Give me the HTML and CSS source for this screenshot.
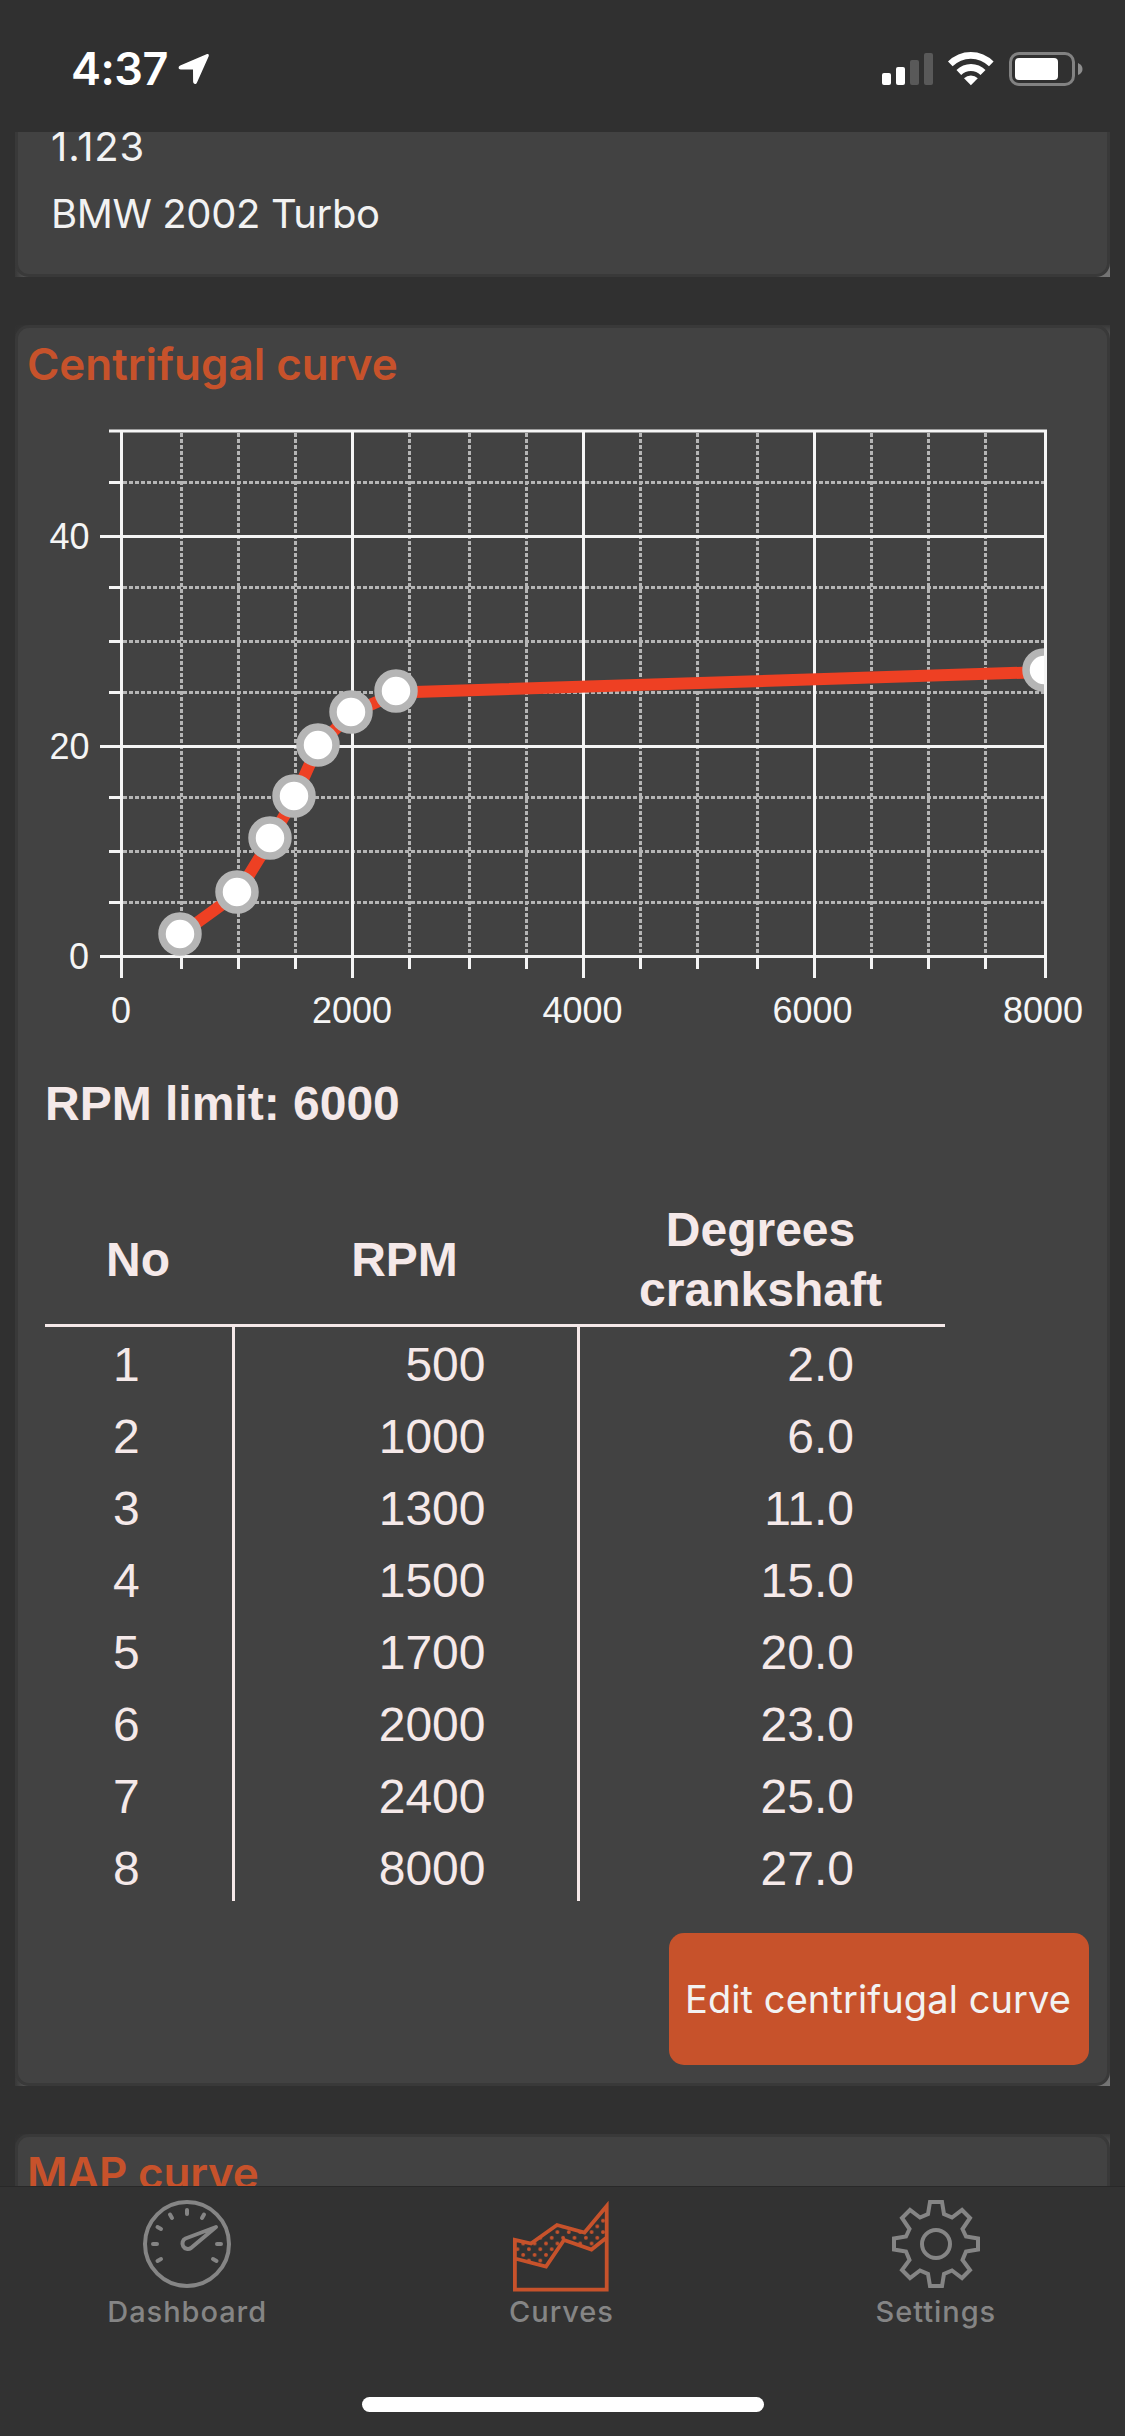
FILE: index.html
```
<!DOCTYPE html>
<html lang="en">
<head>
<meta charset="utf-8">
<title>Curves</title>
<link rel="stylesheet" href="styles.css">
</head>
<body>
<div class="screen">
  <header class="status">
    <div class="status-left">
      <span class="time">4:37</span>
      <svg class="location" width="32" height="32" viewBox="0 0 32 32"><path d="M28.5 1.2 2.2 12.6C-.2 13.8.3 16.3 2.8 16.4L15 16.5 15.1 28.6C15.2 31.4 18 31.8 19 29.4L30.6 3.4C31.4 1.5 30 .5 28.5 1.2Z" fill="#fff"/></svg>
    </div>
    <svg class="status-icons" width="202" height="36" viewBox="881 51 202 36">
      <g fill="#fff">
        <rect x="882" y="73" width="9" height="12" rx="2"/>
        <rect x="896" y="67" width="9" height="18" rx="2"/>
        <rect x="910" y="60" width="9" height="25" rx="2" opacity=".2"/>
        <rect x="924" y="53" width="9" height="32" rx="2" opacity=".2"/>
        <path d="M948 61.500A32 32 0 0 1 993.600 61.500L989 66.300A25.500 25.500 0 0 0 952.600 66.300Z"/>
        <path d="M956.500 70A20.500 20.500 0 0 1 985.500 70L980.500 75A13.500 13.500 0 0 0 961.200 75Z"/>
        <path d="M964 78.300A10 10 0 0 1 977.800 78.300L970.900 85.300Z"/>
        <rect x="1015" y="58" width="43" height="22" rx="4"/>
        <path d="M1078 63Q1082.500 65 1082.500 69T1078 75Z" opacity=".45"/>
      </g>
      <rect x="1010.500" y="53.500" width="63" height="31" rx="8.500" fill="none" stroke="#828282" stroke-width="3"/>
    </svg>
  </header>

  <main class="content">
    <section class="frame">
      <div class="card card-info">
        <p class="info version">1.123</p>
        <p class="info">BMW 2002 Turbo</p>
      </div>
    </section>

    <section class="frame">
      <div class="card card-curve">
        <h2 class="title">Centrifugal curve</h2>
        <svg class="chart" width="1089" height="640" viewBox="18 400 1089 640">
          <defs><clipPath id="plot"><rect x="120" y="430" width="924" height="527"/></clipPath></defs>
          <path class="minor" d="M181.500 433V956M238.500 433V956M295.500 433V956M409.500 433V956M469.500 433V956M526.500 433V956M640.500 433V956M697.500 433V956M757.500 433V956M871.500 433V956M928.500 433V956M985.500 433V956"/>
          <path class="minor" d="M123 482.500H1044M123 587.500H1044M123 641.500H1044M123 692.500H1044M123 797.500H1044M123 851.500H1044M123 902.500H1044"/>
          <path class="major" d="M121.500 431V978M352.500 431V978M583.500 431V978M814.500 431V978M1045.500 429.500V978M109 431H1047M100 536.500H1047M100 746.500H1047M100 956.500H1047"/>
          <path class="major" d="M109 482.500H121M109 587.500H121M109 641.500H121M109 692.500H121M109 797.500H121M109 851.500H121M109 902.500H121"/>
          <path class="major" d="M181.500 957V969M238.500 957V969M295.500 957V969M409.500 957V969M469.500 957V969M526.500 957V969M640.500 957V969M697.500 957V969M757.500 957V969M871.500 957V969M928.500 957V969M985.500 957V969"/>
          <g clip-path="url(#plot)">
            <polyline class="curve" points="180,935 238,893 271,839 295,797 318,746 352,713 398,692.500 1045,672"/>
            <g class="points">
              <circle cx="180" cy="934" r="18"/><circle cx="237" cy="892" r="18"/><circle cx="270" cy="838" r="18"/><circle cx="294" cy="796" r="18"/><circle cx="318" cy="745" r="18"/><circle cx="351" cy="712" r="18"/><circle cx="396" cy="691" r="18"/><circle cx="1044" cy="670" r="18"/>
            </g>
          </g>
          <g class="axis end"><text x="89.500" y="549">40</text><text x="89.500" y="759">20</text><text x="89" y="969">0</text></g>
          <g class="axis mid"><text x="121" y="1023">0</text><text x="352" y="1023">2000</text><text x="582.500" y="1023">4000</text><text x="812.500" y="1023">6000</text><text x="1043" y="1023">8000</text></g>
        </svg>
        <p class="limit">RPM limit: 6000</p>
        <table class="table">
          <thead><tr><th>No</th><th>RPM</th><th>Degrees<br>crankshaft</th></tr></thead>
          <tbody>
            <tr><td>1</td><td>500</td><td>2.0</td></tr>
            <tr><td>2</td><td>1000</td><td>6.0</td></tr>
            <tr><td>3</td><td>1300</td><td>11.0</td></tr>
            <tr><td>4</td><td>1500</td><td>15.0</td></tr>
            <tr><td>5</td><td>1700</td><td>20.0</td></tr>
            <tr><td>6</td><td>2000</td><td>23.0</td></tr>
            <tr><td>7</td><td>2400</td><td>25.0</td></tr>
            <tr><td>8</td><td>8000</td><td>27.0</td></tr>
          </tbody>
        </table>
        <button class="edit">Edit centrifugal curve</button>
      </div>
    </section>

    <section class="frame">
      <div class="card card-map"><h2 class="title">MAP curve</h2></div>
    </section>
  </main>

  <nav class="tabs">
    <div class="tab">
      <svg width="92" height="92" viewBox="0 0 92 92" fill="none" stroke="#858585" stroke-width="4" stroke-linecap="round" stroke-linejoin="round">
        <circle cx="46" cy="46" r="42"/>
        <path d="M46 12v4M29 16.500l2 3.500M63 16.500l-2 3.500M16.500 29l3.500 2M12 46h4M16.500 63l3.500-2M80 46h-4M75.500 63l-3.500-2"/>
        <path d="M75 29 44.500 40.500A5.500 5.500 0 1 0 50 50Z"/>
      </svg>
      <span>Dashboard</span>
    </div>
    <div class="tab">
      <svg width="100" height="94" viewBox="512 2198 100 94">
        <defs>
          <pattern id="dots" x="528" y="2243.500" width="11.400" height="11.400" patternUnits="userSpaceOnUse"><circle cx="1.900" cy="5.700" r="1.900" fill="#c7522b"/><circle cx="7.600" cy="11.400" r="1.900" fill="#c7522b"/><circle cx="7.600" cy="0" r="1.900" fill="#c7522b"/></pattern>
        </defs>
        <path d="M516 2240 532 2243 558 2225 585 2232 608 2205V2238L592 2249 565 2240 547 2267 516 2259Z" fill="url(#dots)"/>
        <path d="M515.900 2239.800 532 2243.500 558 2225 585.500 2232.500 607.700 2206V2289.700H515.900ZM515.900 2258.500 547 2266.500 565 2240 592.500 2249.500 607.700 2237.500" fill="none" stroke="#c7522b" stroke-width="3.800"/>
      </svg>
      <span>Curves</span>
    </div>
    <div class="tab">
      <svg width="92" height="92" viewBox="0 0 92 92" fill="none" stroke="#858585" stroke-width="4">
        <circle cx="46" cy="46" r="14"/>
        <path d="M40 4H52L54 16 62 19.500 72 12 80 20 72.500 31 76 38.500 88 40.500V51.500L76 53.500 72.500 62 80 72 72 80 62 72.500 54 76 52 88H40L38 76 30 72.500 20 80 12 72 19.500 62 16 53.500 4 51.500V40.500L16 38.500 19.500 31 12 20 20 12 30 19.500 38 16Z"/>
      </svg>
      <span>Settings</span>
    </div>
  </nav>
  <div class="home"><i></i></div>
</div>
</body>
</html>
```
FILE: styles.css
```
* { box-sizing: border-box; margin: 0; padding: 0; }
body { background: #303030; }
.screen { width: 1125px; height: 2436px; display: flex; flex-direction: column; overflow: hidden; background: #303030; font-family: Inter, "Liberation Sans", sans-serif; color: #f2f2f2; }

.status { height: 132px; flex: none; display: flex; justify-content: space-between; padding: 51px 42px 0 71px; }
.status-left { display: flex; gap: 9px; }
.time { font-size: 45px; font-weight: 600; line-height: 36px; width: 98px; color: #fff; letter-spacing: -.5px; white-space: nowrap; }
.location { margin-top: 2px; }

.content { height: 2054px; flex: none; overflow: hidden; display: flex; flex-direction: column; gap: 48px; padding: 0 15px; }
/* square frame: its shaded corners show outside the card's rounded border */
.frame {
  flex: none; width: 1095px;
  background:
    linear-gradient(135deg, #303030, #383838) 0 0 / 14px 14px no-repeat,
    linear-gradient(180deg, #383838, #5c5c5c) 100% 0 / 14px 14px no-repeat,
    linear-gradient(90deg, #383838, #5c5c5c) 0 100% / 14px 14px no-repeat,
    linear-gradient(135deg, #666, #777) 100% 100% / 14px 14px no-repeat;
}
.frame:first-child { background-size: 0 0, 0 0, 14px 14px, 14px 14px; }
.card { border: 3px solid #393939; border-radius: 14px; background: #424242; }
.card-info { height: 145px; border-top: 0; border-radius: 0 0 14px 14px; padding: 0 0 0 33px; overflow: hidden; }
.info { font-size: 40px; line-height: 67px; height: 67px; letter-spacing: -.4px; }
.version { margin-top: -19px; letter-spacing: .9px; }
.card-curve { height: 1761px; }
.card-map { height: 300px; }
.title { font-size: 44px; font-weight: 600; line-height: 54px; height: 72px; padding: 9px 0 0 9px; color: #c7522b; letter-spacing: -.05px; }
.card-map .title { letter-spacing: -.25px; }

.chart { display: block; font-family: "Liberation Sans", Arial, sans-serif; }
.major { stroke: #f5f5f5; stroke-width: 3; fill: none; }
.minor { stroke: #b5b5b5; stroke-width: 3; stroke-dasharray: 4 2; fill: none; }
.curve { stroke: #ee4023; stroke-width: 12; fill: none; stroke-linejoin: round; }
.points circle { fill: #fff; stroke: #b5b5b5; stroke-width: 7.500; }
.axis { fill: #f5f5f5; font-size: 36px; }
.end { text-anchor: end; }
.mid { text-anchor: middle; }

.limit { font: bold 48px/60px "Liberation Sans", Arial, sans-serif; color: #f5e9e9; margin: 34px 0 0 27px; }
.table { width: 900px; margin: 65px 0 0 27px; table-layout: fixed; border-collapse: collapse; font-family: "Liberation Sans", Arial, sans-serif; font-size: 48px; color: #f5e9e9; }
.table th { height: 126px; line-height: 60px; border-bottom: 3px solid #f5e9e9; vertical-align: middle; padding: 0 2px 2px 0; }
.table th:nth-child(1) { width: 188px; }
.table th:nth-child(2) { width: 345px; }
.table td { height: 72px; line-height: 60px; padding-top: 7px; text-align: right; }
.table td + td { border-left: 3px solid #f5e9e9; }
.table td:nth-child(1) { text-align: center; padding-right: 24px; }
.table td:nth-child(2), .table td:nth-child(3) { padding-right: 91px; }
.edit { display: block; width: 420px; height: 132px; margin: 32px 18px 0 auto; padding-right: 2px; border: 0; border-radius: 15px; background: #c7522b; color: #f2f2f2; font: 38px/46px Inter, "Liberation Sans", sans-serif; letter-spacing: .08px; white-space: nowrap; }

.tabs { height: 211px; flex: none; display: grid; grid-template-columns: repeat(3, 1fr); padding-right: 2px; background: #323232; border-top: 1px solid #282828; }
.tab { display: flex; flex-direction: column; align-items: center; padding-top: 11px; font-size: 29px; font-weight: 500; line-height: 34px; letter-spacing: .95px; color: #858585; }
.tab svg { flex: none; }
.tab span { margin-top: 5px; }
.tab:nth-child(2) span { margin-top: 3px; }
.home { flex: 1; background: #323232; }
.home i { display: block; width: 402px; height: 15px; margin: 0 auto; border-radius: 8px; background: #fff; }
```
